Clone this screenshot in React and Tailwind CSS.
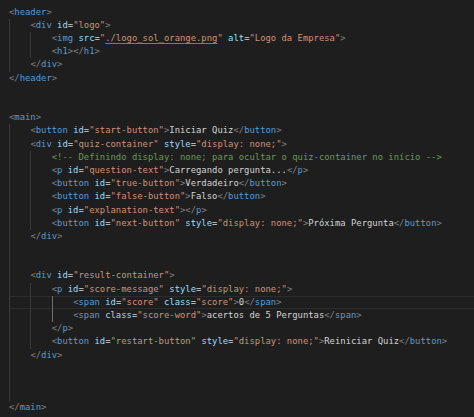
const LINES = [
  [0, 0, '<header>'],
  [1, 1, '<div id="logo">'],
  [2, 2, '<img src="./logo_sol_orange.png" alt="Logo da Empresa">'],
  [2, 2, '<h1></h1>'],
  [1, 1, '</div>'],
  [0, 0, '</header>'],
  [0, 0, ''],
  [0, 0, ''],
  [0, 0, '<main>'],
  [1, 1, '<button id="start-button">Iniciar Quiz</button>'],
  [1, 1, '<div id="quiz-container" style="display: none;">'],
  [2, 2, '<!-- Definindo display: none; para ocultar o quiz-container no início -->'],
  [2, 2, '<p id="question-text">Carregando pergunta...</p>'],
  [2, 2, '<button id="true-button">Verdadeiro</button>'],
  [2, 2, '<button id="false-button">Falso</button>'],
  [2, 2, '<p id="explanation-text"></p>'],
  [2, 2, '<button id="next-button" style="display: none;">Próxima Pergunta</button>'],
  [1, 1, '</div>'],
  [0, 1, ''],
  [0, 1, ''],
  [1, 1, '<div id="result-container">'],
  [2, 2, '<p id="score-message" style="display: none;">'],
  [3, 3, '<span id="score" class="score">0</span>'],
  [3, 3, '<span class="score-word">acertos de 5 Perguntas</span>'],
  [2, 2, '</p>'],
  [2, 2, '<button id="restart-button" style="display: none;">Reiniciar Quiz</button>'],
  [1, 1, '</div>'],
  [0, 1, ''],
  [0, 1, ''],
  [0, 1, ''],
  [0, 0, '</main>'],
];

const COLORS = {
  p: 'text-[#808080]',
  t: 'text-[#569cd6]',
  a: 'text-[#9cdcfe]',
  s: 'text-[#ce9178]',
  x: 'text-[#d4d4d4]',
  c: 'text-[#6a9955]',
};

function tokenize(src) {
  const out = [];
  let i = 0;
  while (i < src.length) {
    if (src.startsWith('<!--', i)) {
      out.push([src.slice(i), 'c']);
      break;
    }
    if (src[i] === '<') {
      const m = /^<(\/?)([a-z0-9]+)/.exec(src.slice(i));
      out.push(['<' + m[1], 'p']);
      out.push([m[2], 't']);
      i += m[0].length;
      while (src[i] !== '>') {
        const a = /^(\s+)([a-z-]+)(=)("[^"]*")/.exec(src.slice(i));
        out.push([a[1], 'x']);
        out.push([a[2], 'a']);
        out.push([a[3], 'x']);
        out.push([a[4], 's']);
        i += a[0].length;
      }
      out.push(['>', 'p']);
      i++;
    } else {
      const j = src.indexOf('<', i);
      const end = j === -1 ? src.length : j;
      out.push([src.slice(i, end), 'x']);
      i = end;
    }
  }
  return out;
}

function Token({ text, kind }) {
  // link underline on the image path
  if (kind === 's' && text.includes('.png')) {
    return (
      <span className={COLORS.s}>
        "<span className="underline decoration-[#c0614a] underline-offset-2">{text.slice(1, -1)}</span>"
      </span>
    );
  }
  return <span className={COLORS[kind]}>{text}</span>;
}

function Line({ indent, guides, src, index }) {
  const current = index === 22;
  const activeGuide = index === 22 || index === 23;
  const rest = '    '.repeat(Math.max(0, indent - guides));
  return (
    <div
      className={`h-[13.2px] leading-[13.2px] whitespace-pre flex ${
        current ? 'shadow-[inset_0_1px_0_#2c2c2c,inset_0_-1px_0_#2c2c2c]' : ''
      }`}
    >
      {Array.from({ length: guides }).map((_, g) => (
        <span
          key={g}
          className={`inline-block h-[13.2px] ${
            activeGuide && g === 2
              ? 'shadow-[inset_1px_0_0_#6e6e6e]'
              : 'shadow-[inset_1px_0_0_#3a3a3a]'
          }`}
        >
          {'    '}
        </span>
      ))}
      <span>
        {rest}
        {tokenize(src).map(([text, kind], k) => (
          <Token key={k} text={text} kind={kind} />
        ))}
      </span>
    </div>
  );
}

export default function App() {
  return (
    <div
      className="w-[474px] h-[417px] overflow-hidden bg-[#1e1e1e] pt-[5.7px] pl-[9px] text-[8.9px]"
      style={{ fontFamily: '"DejaVu Sans Mono", "Liberation Mono", monospace' }}
    >
      {LINES.map(([indent, guides, src], i) => (
        <Line key={i} index={i} indent={indent} guides={guides} src={src} />
      ))}
    </div>
  );
}
